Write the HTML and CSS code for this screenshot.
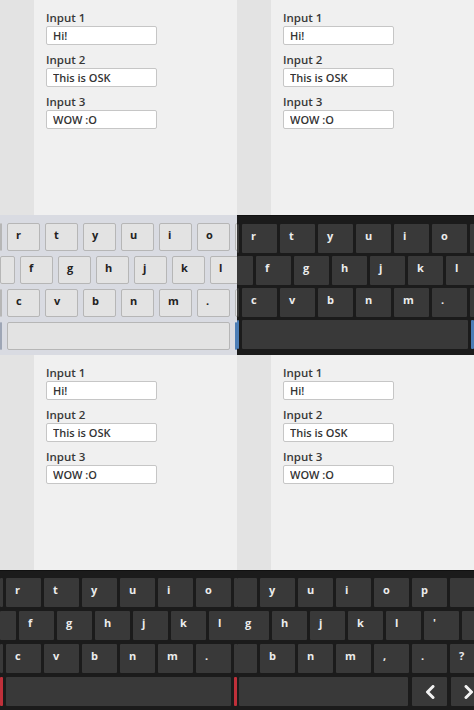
FILE: index.html
```html
<!DOCTYPE html>
<html>
<head>
<meta charset="utf-8">
<link rel="stylesheet" href="styles.css">
</head>
<body>
<div class="collage">

  <!-- top left: light keyboard -->
  <div class="screen">
    <div class="app">
      <div class="sidebar"></div>
      <form class="form">
        <label class="field"><span class="label">Input 1</span><input class="input" type="text" value="Hi!" readonly></label>
        <label class="field"><span class="label">Input 2</span><input class="input" type="text" value="This is OSK" readonly></label>
        <label class="field"><span class="label">Input 3</span><input class="input" type="text" value="WOW :O" readonly></label>
      </form>
    </div>
    <div class="kb kb-light">
      <div class="row">
        <div class="key w2"></div><div class="key">r</div><div class="key">t</div><div class="key">y</div><div class="key">u</div><div class="key">i</div><div class="key">o</div><div class="key"></div>
      </div>
      <div class="row">
        <div class="key w15"></div><div class="key">f</div><div class="key">g</div><div class="key">h</div><div class="key">j</div><div class="key">k</div><div class="key">l</div>
      </div>
      <div class="row">
        <div class="key w2"></div><div class="key">c</div><div class="key">v</div><div class="key">b</div><div class="key">n</div><div class="key">m</div><div class="key">.</div><div class="key"></div>
      </div>
      <div class="row">
        <div class="key w2 mod-grey"></div><div class="key space"></div><div class="key w2 mod-blue"></div>
      </div>
    </div>
  </div>

  <!-- top right: dark keyboard, blue accent -->
  <div class="screen">
    <div class="app">
      <div class="sidebar"></div>
      <form class="form">
        <label class="field"><span class="label">Input 1</span><input class="input" type="text" value="Hi!" readonly></label>
        <label class="field"><span class="label">Input 2</span><input class="input" type="text" value="This is OSK" readonly></label>
        <label class="field"><span class="label">Input 3</span><input class="input" type="text" value="WOW :O" readonly></label>
      </form>
    </div>
    <div class="kb kb-dark kb-tr">
      <div class="row">
        <div class="key w2"></div><div class="key">r</div><div class="key">t</div><div class="key">y</div><div class="key">u</div><div class="key">i</div><div class="key">o</div><div class="key"></div>
      </div>
      <div class="row">
        <div class="key w16"></div><div class="key">f</div><div class="key">g</div><div class="key">h</div><div class="key">j</div><div class="key">k</div><div class="key">l</div>
      </div>
      <div class="row">
        <div class="key w2"></div><div class="key">c</div><div class="key">v</div><div class="key">b</div><div class="key">n</div><div class="key">m</div><div class="key">.</div><div class="key"></div>
      </div>
      <div class="row">
        <div class="key w2 mod-blue"></div><div class="key space"></div><div class="key w3 mod-blue"></div>
      </div>
    </div>
  </div>

  <!-- bottom left: dark keyboard, red accent -->
  <div class="screen">
    <div class="app">
      <div class="sidebar"></div>
      <form class="form">
        <label class="field"><span class="label">Input 1</span><input class="input" type="text" value="Hi!" readonly></label>
        <label class="field"><span class="label">Input 2</span><input class="input" type="text" value="This is OSK" readonly></label>
        <label class="field"><span class="label">Input 3</span><input class="input" type="text" value="WOW :O" readonly></label>
      </form>
    </div>
    <div class="kb kb-dark kb-b">
      <div class="row">
        <div class="key w3"></div><div class="key">r</div><div class="key">t</div><div class="key">y</div><div class="key">u</div><div class="key">i</div><div class="key">o</div><div class="key"></div>
      </div>
      <div class="row">
        <div class="key w16"></div><div class="key">f</div><div class="key">g</div><div class="key">h</div><div class="key">j</div><div class="key">k</div><div class="key">l</div>
      </div>
      <div class="row">
        <div class="key w3"></div><div class="key">c</div><div class="key">v</div><div class="key">b</div><div class="key">n</div><div class="key">m</div><div class="key">.</div><div class="key"></div>
      </div>
      <div class="row">
        <div class="key w3 mod-red"></div><div class="key space"></div><div class="key w3 mod-red"></div>
      </div>
    </div>
  </div>

  <!-- bottom right: dark keyboard, red accent, arrows -->
  <div class="screen">
    <div class="app">
      <div class="sidebar"></div>
      <form class="form">
        <label class="field"><span class="label">Input 1</span><input class="input" type="text" value="Hi!" readonly></label>
        <label class="field"><span class="label">Input 2</span><input class="input" type="text" value="This is OSK" readonly></label>
        <label class="field"><span class="label">Input 3</span><input class="input" type="text" value="WOW :O" readonly></label>
      </form>
    </div>
    <div class="kb kb-dark kb-b">
      <div class="row">
        <div class="key w20"></div><div class="key">y</div><div class="key">u</div><div class="key">i</div><div class="key">o</div><div class="key">p</div><div class="key"></div>
      </div>
      <div class="row">
        <div class="key w32">g</div><div class="key">h</div><div class="key">j</div><div class="key">k</div><div class="key">l</div><div class="key">'</div><div class="key"></div>
      </div>
      <div class="row">
        <div class="key w20"></div><div class="key">b</div><div class="key">n</div><div class="key">m</div><div class="key">,</div><div class="key">.</div><div class="key">?</div>
      </div>
      <div class="row row-arrows">
        <div class="key space-short"></div>
        <div class="key arrow"><svg width="12" height="14" viewBox="0 0 12 14"><path d="M9 1.5 L3.5 7 L9 12.5" fill="none" stroke="#f2f2f2" stroke-width="3" stroke-linecap="round" stroke-linejoin="round"/></svg></div>
        <div class="key arrow"><svg width="12" height="14" viewBox="0 0 12 14"><path d="M3 1.5 L8.5 7 L3 12.5" fill="none" stroke="#f2f2f2" stroke-width="3" stroke-linecap="round" stroke-linejoin="round"/></svg></div>
      </div>
    </div>
  </div>

</div>
</body>
</html>
```
FILE: styles.css
```css
* { box-sizing: border-box; }

html, body {
  margin: 0;
  padding: 0;
  background: #1b1b1b;
}

.collage {
  display: grid;
  grid-template-columns: 237px 237px;
  grid-template-rows: 355px 355px;
  width: 474px;
  height: 710px;
  overflow: hidden;
}

.screen {
  display: flex;
  flex-direction: column;
  overflow: hidden;
}

.app {
  flex: 0 0 215px;
  display: flex;
  background: #f0f0f0;
}

.sidebar {
  flex: 0 0 34px;
  background: #e3e3e3;
}

.form {
  flex: 1;
  margin: 0;
  padding: 10px 0 0 12px;
  display: flex;
  flex-direction: column;
  gap: 7px;
  font-family: "Open Sans", "Liberation Sans", sans-serif;
}

.field {
  display: flex;
  flex-direction: column;
}

.label {
  height: 16px;
  font-size: 11.5px;
  line-height: 16px;
  font-weight: 600;
  color: #383838;
}

.input {
  width: 111px;
  height: 19px;
  margin: 0;
  padding: 0 0 0 6px;
  border: 1px solid #c6c6c6;
  border-radius: 2px;
  background: #ffffff;
  font-family: "Open Sans", "Liberation Sans", sans-serif;
  font-size: 11px;
  font-weight: 600;
  color: #333333;
  outline: none;
}

/* keyboards */
.kb {
  flex: 1;
  display: flex;
  flex-direction: column;
  overflow: hidden;
  font-family: "Open Sans", "Liberation Sans", sans-serif;
  font-weight: 700;
  font-size: 11px;
}

.row {
  display: flex;
  flex-wrap: nowrap;
  flex-shrink: 0;
}

.key {
  flex: 0 0 auto;
  line-height: 14px;
}

.kb-light {
  background: #d9dbe2;
  padding-top: 8px;
  gap: 5px;
}
.kb-light .row { gap: 5px; height: 28px; }
.kb-light .key {
  width: 33px;
  height: 28px;
  background: #e3e3e3;
  border: 1px solid #b6b6b6;
  border-radius: 2px;
  color: #222222;
  padding: 4px 0 0 8px;
}

.kb-dark {
  background: #1b1b1b;
  padding-top: 8px;
  border-top: 1px solid #111111;
}
.kb-tr { gap: 3px; }
.kb-b { gap: 4px; padding-top: 7px; }
.kb-dark .row { gap: 3px; height: 29px; }
.kb-dark .key {
  width: 35px;
  height: 29px;
  background: #393939;
  border-radius: 1px;
  color: #ececec;
  padding: 5px 0 0 9px;
}

.kb .key.w2 { width: 2px; padding: 0; }
.kb .key.w3 { width: 3px; padding: 0; }
.kb .key.w15 { width: 15px; padding: 0; }
.kb .key.w16 { width: 16px; padding: 0; }
.kb .key.w20 { width: 20px; padding: 0; }
.kb .key.w32 { width: 32px; padding-left: 8px; border-radius: 0 1px 1px 0; }

.kb .key.space { flex: 1 1 auto; }
.kb .key.mod-blue { background: #4b7db6; border-color: #4b7db6; }
.kb .key.mod-grey { background: #9ea6b6; border-color: #9ea6b6; }
.kb .key.mod-red { background: #c0303a; }

.row-arrows { padding-left: 2px; }
.row-arrows.row { gap: 4px; }
.kb .key.space-short { width: 169px; }
.kb .key.arrow {
  display: flex;
  align-items: center;
  justify-content: center;
  padding: 0;
}
```
